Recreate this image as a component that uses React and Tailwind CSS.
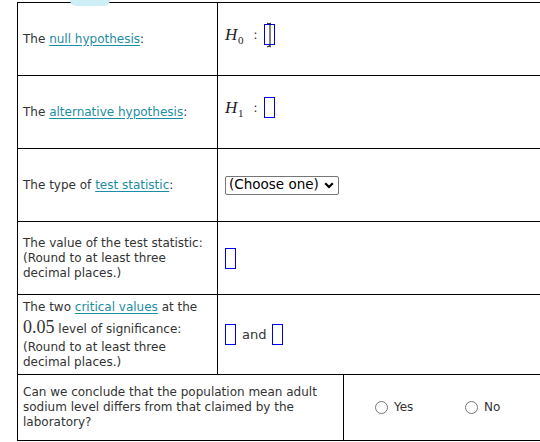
import React from 'react';

const font = { fontFamily: '"DejaVu Sans", Verdana, sans-serif' };

const Link = ({ children }) => (
  <a href="#" className="text-[#1b8ea3] underline underline-offset-2">
    {children}
  </a>
);

const Box = ({ cursor }) => (
  <span className="relative inline-block w-[11px] h-[21px] border border-[#0000ee] align-middle">
    {cursor && (
      <svg className="absolute left-[1px] top-[-3px]" width="8" height="26" viewBox="0 0 8 26">
        <path d="M1 1 L3 2 L5 1 M4 2 V24 M1 25 L3 24 L5 25" stroke="#000" strokeWidth="1" fill="none" />
      </svg>
    )}
  </span>
);

const Hyp = ({ sub, cursor }) => (
  <div className="flex items-center mb-[10px]">
    <span className="relative text-[17px] italic text-[#222] leading-none" style={{ fontFamily: '"Liberation Serif", serif' }}>
      H
      <span className="absolute left-[13px] top-[9px] not-italic text-[11px]">{sub}</span>
    </span>
    <span className="ml-[16px] mr-[6px] text-[13px] text-[#333]">:</span>
    <Box cursor={cursor} />
  </div>
);

const Row = ({ h, left, right }) => (
  <div className={`flex border-b border-black ${h}`}>
    <div className="w-[200px] shrink-0 border-r border-black flex items-center pl-[5px] pr-[8px]">{left}</div>
    <div className="flex-1 flex items-center pl-[7px]">{right}</div>
  </div>
);

export default function App() {
  return (
    <div className="relative w-[540px] h-[442px] overflow-hidden bg-white text-[12px] leading-[15px] text-[#333]" style={font}>
      <div className="absolute left-[70px] top-0 w-[40px] h-[6px] rounded-b-[6px] bg-[#cdeef5]" />
      <div className="ml-[17px] mt-[2px] w-[560px] border-t border-l border-black">
        <Row
          h="h-[73px]"
          left={<span>The <Link>null hypothesis</Link>:</span>}
          right={<Hyp sub="0" cursor />}
        />
        <Row
          h="h-[73px]"
          left={<span>The <Link>alternative hypothesis</Link>:</span>}
          right={<Hyp sub="1" />}
        />
        <Row
          h="h-[73px]"
          left={<span>The type of <Link>test statistic</Link>:</span>}
          right={
            <div className="flex items-center gap-[5px] w-[114px] h-[19px] border border-[#767676] rounded-[2px] pl-[3px] text-[13.5px] text-black leading-none">
              <span>(Choose one)</span>
              <svg width="10" height="7" viewBox="0 0 10 7">
                <path d="M1.2 1.2 L5 5 L8.8 1.2" stroke="#000" strokeWidth="2.2" fill="none" />
              </svg>
            </div>
          }
        />
        <Row
          h="h-[73px]"
          left={
            <div>
              The value of the test statistic:
              <br />
              (Round to at least three
              <br />
              decimal places.)
            </div>
          }
          right={<Box />}
        />
        <Row
          h="h-[80px]"
          left={
            <div>
              The two <Link>critical values</Link> at the
              <br />
              <span className="text-[18px] leading-[25px]" style={{ fontFamily: '"Liberation Serif", serif' }}>0.05</span> level of significance:
              <br />
              (Round to at least three
              <br />
              decimal places.)
            </div>
          }
          right={
            <div className="flex items-center gap-[6px] text-[13px]">
              <Box />
              <span>and</span>
              <Box />
            </div>
          }
        />
        <div className="flex h-[66px] border-b border-black">
          <div className="w-[326px] shrink-0 border-r border-black flex items-center pl-[5px] pr-[6px]">
            <div>
              Can we conclude that the population mean adult
              <br />
              sodium level differs from that claimed by the
              <br />
              laboratory?
            </div>
          </div>
          <div className="flex items-center pl-[31px]">
            <label className="flex items-center gap-[6px] w-[90px]">
              <span className="w-[13px] h-[13px] rounded-full border border-[#767676]" />
              <span>Yes</span>
            </label>
            <label className="flex items-center gap-[6px]">
              <span className="w-[13px] h-[13px] rounded-full border border-[#767676]" />
              <span>No</span>
            </label>
          </div>
        </div>
      </div>
    </div>
  );
}
